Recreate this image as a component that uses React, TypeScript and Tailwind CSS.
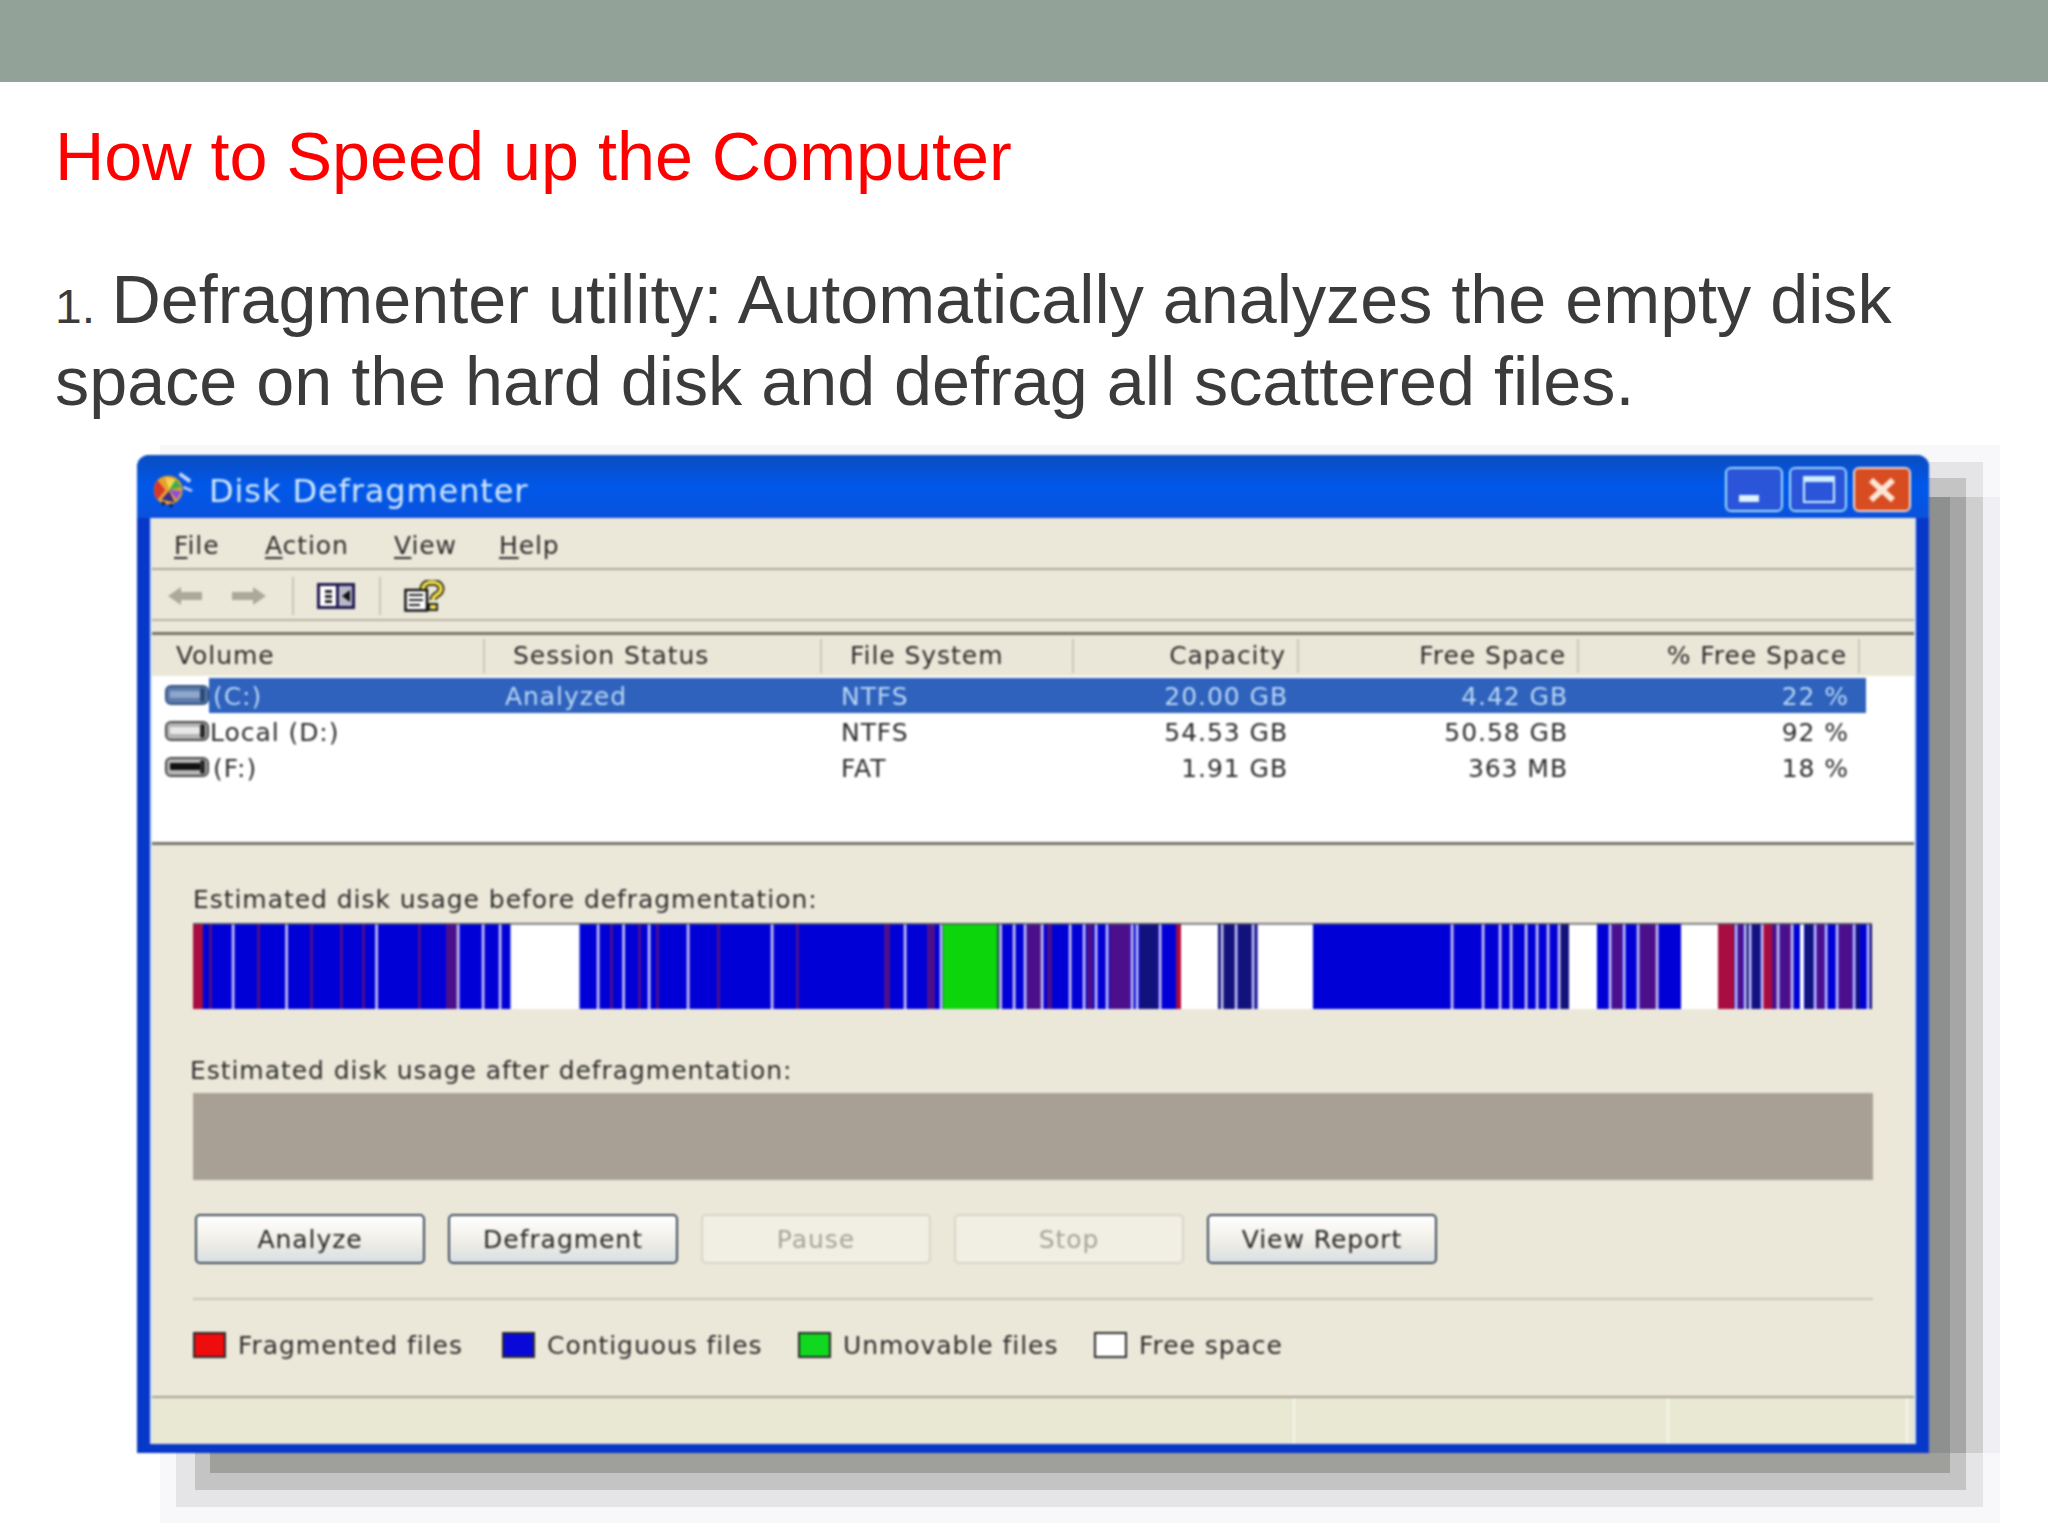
const FONT = "font-['DejaVu_Sans',sans-serif]";

// page x coordinates of the fragmentation bar, drawn on a viewBox that starts at x=193
const WHITE: [number, number][] = [[510.5, 579.5], [1181, 1218], [1257.5, 1313], [1569, 1597], [1681, 1718], [1800, 1804]];
const PURPLE: [number, number][] = [
  [209, 212], [257, 260], [310, 313], [340, 343], [362, 365], [418, 421], [446, 457], [610, 613], [638, 641], [656, 659],
  [717, 720], [796, 799], [884, 890], [927, 935], [1027, 1041], [1047, 1052], [1087, 1093], [1110, 1130], [1612, 1622],
  [1640, 1656], [1738, 1743], [1772, 1777], [1780, 1791], [1817, 1824], [1839, 1852],
];
const NAVY: [number, number][] = [
  [1140, 1158], [1218, 1221], [1223, 1235], [1238, 1252], [1255, 1257], [1746, 1749], [1752, 1760], [1805, 1813],
  [1870, 1872], [1559, 1569], [1856, 1860],
];
const CRIMSON: [number, number][] = [[193, 203], [1176, 1181], [1718, 1734], [1763, 1772]];
const LINES = [
  233, 286.5, 376.5, 458, 483, 500, 598, 623.5, 649, 688, 772, 905, 941, 1000.5, 1014, 1025, 1042, 1070, 1084, 1096, 1107,
  1132, 1137, 1160, 1222, 1236, 1253, 1452, 1483, 1500, 1511, 1526, 1537, 1548, 1559, 1610, 1624, 1638, 1657, 1736, 1745,
  1750, 1762, 1778, 1792, 1815, 1826, 1837, 1854, 1868,
];

function DiskBar() {
  const rect = (s: [number, number], fill: string, i: number) => <rect key={fill + i} x={s[0]} y={0} width={s[1] - s[0]} height={86} fill={fill} />;
  return (
    <svg viewBox="193 0 1681 86" className="block w-[1681px] h-[86px]" preserveAspectRatio="none">
      <rect x={193} y={0} width={1679} height={86} fill="#0000d6" />
      {PURPLE.map((s, i) => rect(s, '#4c0f8c', i))}
      {NAVY.map((s, i) => rect(s, '#12127c', i))}
      {CRIMSON.map((s, i) => rect(s, '#a80c40', i))}
      {LINES.map((x, i) => <rect key={i} x={x - 1.2} y={0} width={2.6} height={86} fill="#cfc9f0" />)}
      {WHITE.map((s, i) => rect(s, '#ffffff', i))}
      <rect x={943} y={0} width={54} height={86} fill="#0cd50c" />
      <rect x={997} y={0} width={2} height={86} fill="#15603a" />
      <rect x={193} y={0} width={1679} height={1.5} fill="#555a60" />
    </svg>
  );
}

function AppIcon() {
  return (
    <svg viewBox="0 0 46 46" className="w-[44px] h-[44px] shrink-0">
      <circle cx="19" cy="23" r="15" fill="#e8a030" />
      <path d="M8 13 A15 15 0 0 0 8 33 L16 23 Z" fill="#d8362a" />
      <path d="M16 10 L27 12 L20 23 Z" fill="#f2d94e" />
      <path d="M20 23 L33 24 L28 33 Z" fill="#8a4ee0" />
      <path d="M20 23 L27 12 L33 20 Z" fill="#3fae4a" />
      <path d="M12 33 L20 24 L26 36 Z" fill="#3a2c8a" />
      <circle cx="14" cy="37" r="2" fill="#1c1c40" />
      <circle cx="22" cy="39" r="2" fill="#1c1c40" />
      <path d="M31 6 L42 14" stroke="#c8d4f8" strokeWidth="4" />
      <path d="M35 20 L44 24" stroke="#b8c8f8" strokeWidth="3" />
    </svg>
  );
}

function Drive({ slot, selected }: { slot: string; selected?: boolean }) {
  return (
    <svg viewBox="0 0 45 20" className="w-[45px] h-[20px] shrink-0">
      <rect x="1" y="1" width="42" height="18" rx="5" fill={selected ? '#5c7cae' : '#b4b4b4'} stroke={selected ? '#34527e' : '#4a4a4a'} strokeWidth="2" />
      <rect x="5" y="6" width="30" height="7" rx="1" fill={slot} />
      <rect x="35" y="3" width="5" height="14" rx="2" fill={selected ? '#2c4a78' : '#2a2a2a'} />
    </svg>
  );
}

function Arrow({ flip }: { flip?: boolean }) {
  return (
    <svg viewBox="0 0 36 20" className={`w-[36px] h-[20px] ${flip ? 'scale-x-[-1]' : ''}`}>
      <path d="M1 10 L14 1 V6 H35 V14 H14 V19 Z" fill="#aaa99c" />
    </svg>
  );
}

function MenuItem({ first, rest, className }: { first: string; rest: string; className: string }) {
  return (
    <span className={className}>
      <span className="underline underline-offset-[3px]">{first}</span>
      {rest}
    </span>
  );
}

function Xp({ label, disabled, className }: { label: string; disabled?: boolean; className?: string }) {
  return (
    <button
      className={`w-[230px] h-[50px] rounded-[5px] border-2 text-[25px] tracking-[0.95px] pt-[1px] ${className ?? ''} ${
        disabled
          ? 'border-[#d9d5c6] bg-[#f1eee3] text-[#a6a598]'
          : 'border-[#3d4c5c] bg-gradient-to-b from-white via-[#f2f0e8] to-[#d9dfe2] text-[#262626]'
      }`}
    >
      {label}
    </button>
  );
}

function Legend({ color, label, className }: { color: string; label: string; className: string }) {
  return (
    <div className={`flex items-center ${className}`}>
      <span className={`w-[33px] h-[26px] border-2 border-[#2a2a2a] ${color}`} />
      <span className="ml-[12px] pt-[1px] text-[25px] leading-[25px] tracking-[0.95px] text-[#2c2c2c]">{label}</span>
    </div>
  );
}

const ROWS = [
  { name: '(C:)', status: 'Analyzed', fs: 'NTFS', cap: '20.00 GB', free: '4.42 GB', pct: '22 %', slot: '#8ea6c8', pad: 'pl-[4px]' },
  { name: 'Local (D:)', status: '', fs: 'NTFS', cap: '54.53 GB', free: '50.58 GB', pct: '92 %', slot: '#e8e8e8', pad: 'pl-[1px]' },
  { name: '(F:)', status: '', fs: 'FAT', cap: '1.91 GB', free: '363 MB', pct: '18 %', slot: '#111111', pad: 'pl-[4px]' },
];

export default function App() {
  return (
    <div className="w-[2048px] h-[1536px] bg-white overflow-hidden relative">
      <div className="h-[82px] bg-[#93a299]" />

      <h1 className="mt-[31px] pl-[55px] font-['Liberation_Sans',sans-serif] text-[68.3px] leading-[86px] text-[#ff0000] font-normal">
        How to Speed up the Computer
      </h1>

      <p className="mt-[59px] pl-[55px] font-['Liberation_Sans',sans-serif] text-[68.3px] leading-[82px] text-[#3b3b3b]">
        <span className="text-[48px] leading-none mr-[3px]">1. </span>Defragmenter utility: Automatically analyzes the empty disk
        <br />
        space on the hard disk and defrag all scattered files.
      </p>

      {/* window with its stepped drop shadow behind it */}
      <div className="relative mt-[33px] ml-[137px] w-[1792px] h-[998px]">
        <div className="absolute left-[23px] top-[-10px] right-[-71px] bottom-[-70px] bg-[#f8f8fa]" />
        <div className="absolute left-[39px] top-[7px] right-[-54px] bottom-[-54px] bg-[#e5e5e7]" />
        <div className="absolute left-[58px] top-[23px] right-[-37px] bottom-[-37px] bg-[#c4c4c4]" />
        <div className="absolute left-[73px] top-[42px] right-[-21px] bottom-[-20px] bg-[#9f9f9c]" />
        {/* the right side of the shadow is a step darker than the bottom */}
        <div className="absolute top-[42px] bottom-0 right-[-21px] w-[21px] bg-[#8e9090]" />
        <div className="absolute top-[42px] bottom-0 right-[-37px] w-[16px] bg-[#a6a6a6]" />
        <div className="absolute top-[42px] bottom-0 right-[-54px] w-[17px] bg-[#cfcfd0]" />
        <div className="absolute top-[42px] bottom-0 right-[-71px] w-[17px] bg-[#f0f0f4]" />

        <div className={`relative w-full h-full rounded-t-[12px] bg-[#0838c8] pl-[13px] pr-[13px] pb-[9px] flex flex-col blur-[0.9px] ${FONT}`}>
          <div className="-mx-[13px] h-[63px] shrink-0 rounded-t-[12px] bg-gradient-to-b from-[#0a4cc0] via-[#0058ea] to-[#0a52dc] flex items-center pt-[6px] pl-[13px] pr-[18px]">
            <AppIcon />
            <span className="ml-[15px] pt-[3px] text-[32px] tracking-[0.9px] text-[#cfe6fb]">Disk Defragmenter</span>
            <div className="ml-auto flex items-center gap-[6px]">
              <div className="relative w-[58px] h-[45px] rounded-[6px] border-2 border-[#9fdcff] bg-[#2a55d8]">
                <span className="absolute left-[12px] bottom-[8px] w-[20px] h-[7px] bg-[#dff2ff]" />
              </div>
              <div className="relative w-[58px] h-[45px] rounded-[6px] border-2 border-[#9fdcff] bg-[#2a55d8]">
                <span className="absolute left-[12px] top-[7px] w-[32px] h-[27px] border-2 border-t-[6px] border-[#cfeeff]" />
              </div>
              <div className="w-[58px] h-[45px] rounded-[6px] border-2 border-[#f0d8d0] bg-[#d84c22] flex items-center justify-center">
                <svg viewBox="0 0 30 26" className="w-[30px] h-[26px]">
                  <path d="M4 3 L26 23 M26 3 L4 23" stroke="#fbe6d4" strokeWidth="6" />
                </svg>
              </div>
            </div>
          </div>

          <div className="flex-1 bg-[#ece8d9] flex flex-col border-x-2 border-[#cfe0f4]">
            <div className="h-[52px] shrink-0 border-b-2 border-[#aaa89a] relative text-[25px] tracking-[0.9px] text-[#2c2c2c] flex items-center pt-[6px] pl-[22px]">
              <MenuItem first="F" rest="ile" className="w-[91px]" />
              <MenuItem first="A" rest="ction" className="w-[129px]" />
              <MenuItem first="V" rest="iew" className="w-[105px]" />
              <MenuItem first="H" rest="elp" className="" />
            </div>

            <div className="h-[51px] shrink-0 border-b-2 border-[#b5b2a4] flex items-center pt-[3px] pl-[15px]">
              <Arrow />
              <div className="ml-[28px]"><Arrow flip /></div>
              <span className="ml-[25px] w-[2px] h-[38px] bg-[#c9c6b6]" />
              <div className="ml-[23px] w-[38px] h-[26px] border-[3px] border-[#221a52] flex">
                <div className="w-1/2 bg-white flex flex-col items-center justify-center gap-[2px]">
                  <span className="w-[7px] h-[3px] bg-[#222]" />
                  <span className="w-[7px] h-[3px] bg-[#222]" />
                  <span className="w-[7px] h-[3px] bg-[#222]" />
                </div>
                <div className="w-1/2 bg-[#b8b8c8] border-l-[3px] border-[#221a52] flex items-center justify-center">
                  <span className="w-0 h-0 border-y-[6px] border-y-transparent border-r-[8px] border-r-[#111]" />
                </div>
              </div>
              <span className="ml-[24px] w-[2px] h-[38px] bg-[#c9c6b6]" />
              <svg viewBox="0 0 42 32" className="ml-[23px] w-[42px] h-[32px]">
                <path d="M1.5 10 H23 V30.5 H1.5 Z" fill="#fff" stroke="#111" strokeWidth="2.5" />
                <path d="M5 15 H19 M5 20 H19 M5 25 H16" stroke="#222" strokeWidth="2" />
                <path d="M19 9 C19 0 37 0 37 9 C37 15 29 14 29 20" fill="none" stroke="#2a2a14" strokeWidth="7" />
                <path d="M19 9 C19 0 37 0 37 9 C37 15 29 14 29 20" fill="none" stroke="#f4e04a" strokeWidth="3.5" />
                <rect x="25" y="24" width="8" height="6" fill="#f4e04a" stroke="#222" strokeWidth="2" />
              </svg>
            </div>

            <div className="mt-[11px] h-[213px] shrink-0 bg-white border-t-[3px] border-b-[3px] border-[#76736a] flex flex-col text-[25px] tracking-[0.95px] text-[#2c2c2c]">
              <div className="h-[41px] shrink-0 bg-[#ebe7d8] grid grid-cols-[333px_337px_252px_225px_280px_281px] items-center">
                <div className="pl-[24px] h-[34px] leading-[34px] border-r-2 border-[#cdc9b8]">Volume</div>
                <div className="pl-[28px] h-[34px] leading-[34px] border-r-2 border-[#cdc9b8]">Session Status</div>
                <div className="pl-[28px] h-[34px] leading-[34px] border-r-2 border-[#cdc9b8]">File System</div>
                <div className="pr-[11px] h-[34px] leading-[34px] text-right border-r-2 border-[#cdc9b8]">Capacity</div>
                <div className="pr-[11px] h-[34px] leading-[34px] text-right border-r-2 border-[#cdc9b8]">Free Space</div>
                <div className="pr-[11px] h-[34px] leading-[34px] text-right border-r-2 border-[#cdc9b8]">% Free Space</div>
              </div>
              <div className="h-[1px]" />
              {ROWS.map((r, i) => (
                <div key={r.name} className="h-[36px] flex items-center pl-[13px]">
                  <Drive slot={r.slot} selected={i === 0} />
                  <div
                    className={`ml-[-1px] w-[1657px] h-[35px] grid grid-cols-[276px_337px_252px_225px_280px_287px] items-center ${
                      i === 0 ? 'bg-[#2f62bd] text-[#b9d6f4]' : ''
                    }`}
                  >
                    <div className={r.pad}>{r.name}</div>
                    <div className="pl-[20px]">{r.status}</div>
                    <div className="pl-[19px]">{r.fs}</div>
                    <div className="pr-[11px] text-right">{r.cap}</div>
                    <div className="pr-[11px] text-right">{r.free}</div>
                    <div className="pr-[17px] text-right">{r.pct}</div>
                  </div>
                </div>
              ))}
            </div>

            <div className="flex-1 pl-[41px] pr-[41px] pt-[40px]">
              <div className="h-[30px] leading-[30px] text-[25px] tracking-[0.95px] text-[#2c2c2c]">Estimated disk usage before defragmentation:</div>
              <div className="mt-[8px]"><DiskBar /></div>
              <div className="mt-[47px] -ml-[3px] h-[30px] leading-[30px] text-[25px] tracking-[0.95px] text-[#2c2c2c]">Estimated disk usage after defragmentation:</div>
              <div className="mt-[7px] h-[87px] w-[1680px] bg-[#a8a094]" />
              <div className="mt-[34px] flex gap-[23px] ml-[2px]">
                <Xp label="Analyze" />
                <Xp label="Defragment" />
                <Xp label="Pause" disabled />
                <Xp label="Stop" disabled />
                <Xp label="View Report" />
              </div>
              <div className="mt-[34px] h-[2px] w-[1680px] bg-[#c8c5b6]" />
              <div className="mt-[32px] flex">
                <Legend color="bg-[#ee0c0c]" label="Fragmented files" className="w-[309px]" />
                <Legend color="bg-[#0808d8]" label="Contiguous files" className="w-[296px]" />
                <Legend color="bg-[#10d820]" label="Unmovable files" className="w-[296px]" />
                <Legend color="bg-white" label="Free space" className="" />
              </div>
            </div>

            <div className="h-[48px] shrink-0 bg-[#e8e8d3] border-t-2 border-[#a5a192] flex">
              <div className="w-[1143px] border-r-2 border-[#f8f6ea]" />
              <div className="w-[374px] border-r-2 border-[#f8f6ea]" />
              <div className="w-[239px] border-r-2 border-[#f8f6ea]" />
            </div>
          </div>
        </div>
      </div>
    </div>
  );
}
